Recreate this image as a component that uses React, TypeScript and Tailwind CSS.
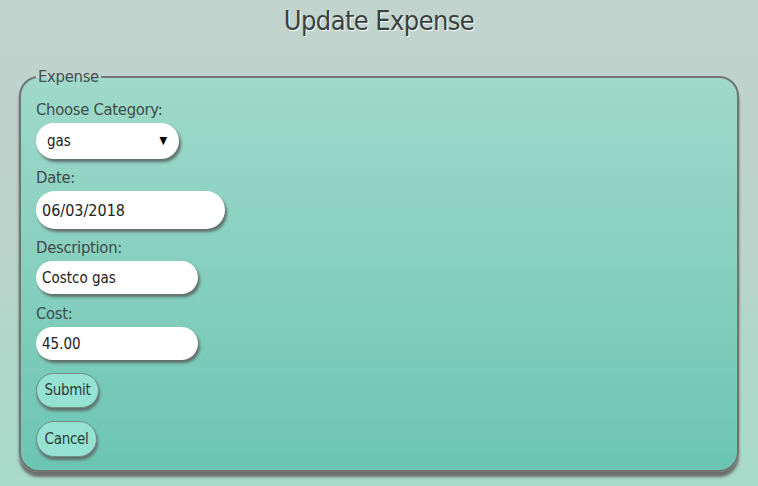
import React, { useState } from 'react';

const font = { fontFamily: '"DejaVu Sans Condensed", "Liberation Sans", sans-serif' };

const categories = ['gas', 'food', 'rent', 'utilities', 'entertainment'];

const UpdateExpense: React.FC = () => {
  const [category, setCategory] = useState('gas');
  const [date, setDate] = useState('06/03/2018');
  const [description, setDescription] = useState('Costco gas');
  const [cost, setCost] = useState('45.00');

  const handleSubmit = (e: React.FormEvent) => {
    e.preventDefault();
    console.log('Update', { category, date, description, cost });
  };

  return (
    <div
      className="min-h-[486px] w-full bg-gradient-to-b from-[#c1d3cd] via-[#bbd4cc] to-[#a6dac9] pt-[3px]"
      style={font}
    >
      <h1 className="text-center text-[27px] leading-[36px] tracking-[-0.6px] text-[#3a3f3b] [text-shadow:1px_1px_1px_#ffffff]">
        Update Expense
      </h1>

      <form onSubmit={handleSubmit} className="mx-[19px] mt-[28px]">
        <fieldset className="flex flex-col items-start rounded-[20px] border-2 border-[#737373] bg-gradient-to-b from-[#9fd9c9] to-[#6bc5b3] px-[15px] pt-[13px] pb-[13px] shadow-[0_5px_3px_#6e6e6e]">
          <legend className="px-0.5 text-[16.5px] leading-[20px] tracking-[-0.3px] text-[#3f5050]">Expense</legend>

          <label className="text-[16.5px] leading-[20px] tracking-[-0.3px] text-[#3d4b4b]">Choose Category:</label>
          <div className="relative mt-[3px]">
            <select
              value={category}
              onChange={e => setCategory(e.target.value)}
              className="h-[36px] w-[143px] appearance-none rounded-full bg-white pl-[11px] text-[15px] text-[#222] shadow-[2px_3px_3px_#5f6f6b] outline-none"
            >
              {categories.map(c => (
                <option key={c} value={c}>{c}</option>
              ))}
            </select>
            <span className="pointer-events-none absolute right-[12px] top-[10px] text-[11px] text-black">▼</span>
          </div>

          <label className="mt-[9px] text-[16.5px] leading-[20px] tracking-[-0.3px] text-[#3d4b4b]">Date:</label>
          <input
            value={date}
            onChange={e => setDate(e.target.value)}
            className="mt-[3px] h-[38px] w-[189px] rounded-full bg-white pl-[6px] text-[16px] text-[#222] shadow-[2px_3px_3px_#5f6f6b] outline-none"
          />

          <label className="mt-[9px] text-[16.5px] leading-[20px] tracking-[-0.3px] text-[#3d4b4b]">Description:</label>
          <input
            value={description}
            onChange={e => setDescription(e.target.value)}
            className="mt-[3px] h-[33px] w-[162px] rounded-full bg-white pl-[6px] text-[15px] text-[#222] shadow-[2px_3px_3px_#5f6f6b] outline-none"
          />

          <label className="mt-[10px] text-[16.5px] leading-[20px] tracking-[-0.3px] text-[#3d4b4b]">Cost:</label>
          <input
            value={cost}
            onChange={e => setCost(e.target.value)}
            className="mt-[3px] h-[33px] w-[162px] rounded-full bg-white pl-[6px] text-[15px] text-[#222] shadow-[2px_3px_3px_#5f6f6b] outline-none"
          />

          <button
            type="submit"
            className="mt-[13px] h-[35px] w-[63px] rounded-full border border-[#6f8c86] bg-[#95e2d2] text-[15px] tracking-[-0.3px] text-[#2f3a3a] shadow-[1px_3px_3px_#5f6f6b]"
          >
            Submit
          </button>
          <button
            type="button"
            className="mt-[13px] h-[36px] w-[61px] rounded-full border border-[#6f8c86] bg-[#95e2d2] text-[15px] tracking-[-0.3px] text-[#2f3a3a] shadow-[1px_3px_3px_#5f6f6b]"
          >
            Cancel
          </button>
        </fieldset>
      </form>
    </div>
  );
};

export default function App() {
  return <UpdateExpense />;
}
